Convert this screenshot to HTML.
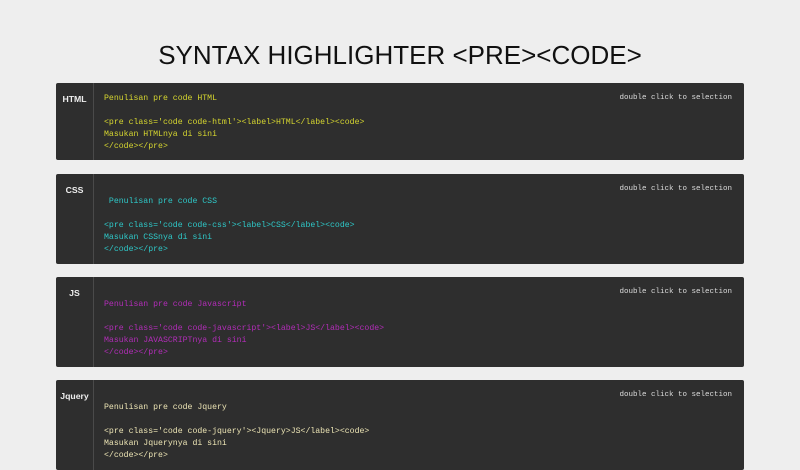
<!DOCTYPE html>
<html><head><style>
body{margin:0;background:#eeeeee;width:800px;height:450px;overflow:hidden;font-family:"Liberation Sans",sans-serif;}
h1{position:absolute;left:0;width:800px;top:40px;margin:0;text-align:center;font-weight:normal;font-size:26px;color:#111;}
.box{position:absolute;left:56px;width:688px;background:#2e2e2e;border-radius:2px;}
.lab{position:absolute;left:0;top:0;bottom:0;width:38px;border-right:1px solid #4a4a4a;color:#eee;font-size:8.7px;font-weight:bold;text-align:center;padding-top:11px;box-sizing:border-box;}
.dc{position:absolute;right:12px;font-family:"Liberation Mono",monospace;font-size:7.5px;color:#ddd;}
pre{position:absolute;left:48px;margin:0;font-family:"Liberation Mono",monospace;font-size:8.2px;line-height:12px;}
</style></head><body>
<h1>SYNTAX HIGHLIGHTER &lt;PRE&gt;&lt;CODE&gt;</h1>
<div class="box" style="top:83px;height:77px"><div class="lab">HTML</div><div class="dc" style="top:11px">double click to selection</div>
<pre style="top:10px;color:#d6d630">Penulisan pre code HTML

&lt;pre class='code code-html'&gt;&lt;label&gt;HTML&lt;/label&gt;&lt;code&gt;
Masukan HTMLnya di sini
&lt;/code&gt;&lt;/pre&gt;</pre></div>
<div class="box" style="top:174px;height:90px"><div class="lab">CSS</div><div class="dc" style="top:11px">double click to selection</div>
<pre style="top:22px;color:#2ec8c8"> Penulisan pre code CSS

&lt;pre class='code code-css'&gt;&lt;label&gt;CSS&lt;/label&gt;&lt;code&gt;
Masukan CSSnya di sini
&lt;/code&gt;&lt;/pre&gt;</pre></div>
<div class="box" style="top:277px;height:90px"><div class="lab">JS</div><div class="dc" style="top:11px">double click to selection</div>
<pre style="top:22px;color:#b22db8">Penulisan pre code Javascript

&lt;pre class='code code-javascript'&gt;&lt;label&gt;JS&lt;/label&gt;&lt;code&gt;
Masukan JAVASCRIPTnya di sini
&lt;/code&gt;&lt;/pre&gt;</pre></div>
<div class="box" style="top:380px;height:90px"><div class="lab">Jquery</div><div class="dc" style="top:11px">double click to selection</div>
<pre style="top:22px;color:#ece4b4">Penulisan pre code Jquery

&lt;pre class='code code-jquery'&gt;&lt;Jquery&gt;JS&lt;/label&gt;&lt;code&gt;
Masukan Jquerynya di sini
&lt;/code&gt;&lt;/pre&gt;</pre></div>
</body></html>
